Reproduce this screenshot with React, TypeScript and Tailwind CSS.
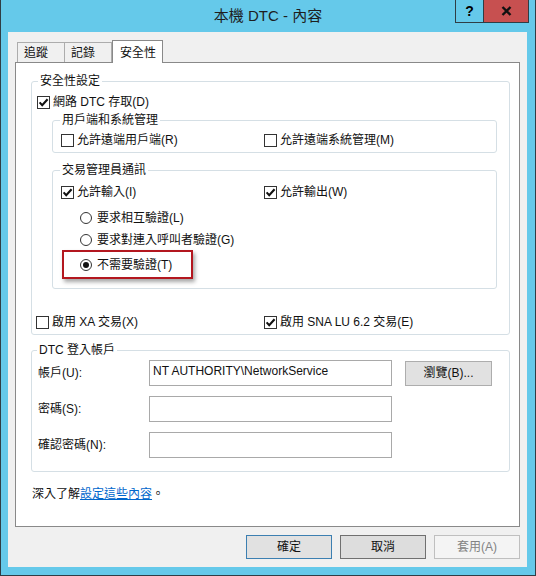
import React from 'react';

const Check: React.FC<{ checked?: boolean; label: string; className?: string }> = ({ checked, label, className = '' }) => (
  <div className={`flex h-[16px] items-center ${className}`}>
    <span className="flex h-[13px] w-[13px] shrink-0 items-center justify-center border border-[#333333] bg-white">
      {checked && (
        <svg width="11" height="11" viewBox="0 0 11 11">
          <path d="M1.6 5.4 L4.2 8.2 L9.6 2.2" fill="none" stroke="#111111" strokeWidth="2.1" />
        </svg>
      )}
    </span>
    <span className="ml-[3px] whitespace-nowrap">{label}</span>
  </div>
);

const Radio: React.FC<{ checked?: boolean; label: string; className?: string }> = ({ checked, label, className = '' }) => (
  <div className={`flex h-[16px] items-center ${className}`}>
    <span className="flex h-[12px] w-[12px] shrink-0 items-center justify-center rounded-full border border-[#333333] bg-white">
      {checked && <span className="h-[6px] w-[6px] rounded-full bg-[#111111]" />}
    </span>
    <span className="ml-[5px] whitespace-nowrap">{label}</span>
  </div>
);

const Field: React.FC<{ label: string; value?: string; className?: string; children?: React.ReactNode }> = ({ label, value, className = '', children }) => (
  <div className={`flex items-center pl-[6px] ${className}`}>
    <span className="w-[111px] whitespace-nowrap">{label}</span>
    <div className="h-[26px] w-[243px] border border-[#a9a9a9] bg-white pl-[3px] pt-[2px] whitespace-nowrap">{value}</div>
    {children}
  </div>
);

export default function App() {
  return (
    <div className="h-[576px] w-[536px] border-x border-b border-[#2f3d45] bg-[#65c9ea] text-[12px] leading-[16px] text-[#111111] font-['Liberation_Sans','Noto_Sans_CJK_TC',sans-serif]">
      {/* title bar */}
      <div className="grid h-[32px] grid-cols-[1fr_auto_1fr]">
        <div />
        <div className="pt-[7px] text-[15px] leading-[18px] text-[#1e1e1e]">本機 DTC - 內容</div>
        <div className="flex justify-end pr-[6px]">
          <div className="flex h-[23px] border-x border-b border-[#2f3d45]">
            <div className="flex w-[27px] items-center justify-center text-[14px] font-bold text-black">?</div>
            <div className="flex w-[45px] items-center justify-center border-l border-[#2f3d45] bg-[#c75050]">
              <svg width="11" height="10" viewBox="0 0 11 10">
                <path d="M1.5 1 L9.5 9 M9.5 1 L1.5 9" stroke="#111111" strokeWidth="2.4" />
              </svg>
            </div>
          </div>
        </div>
      </div>

      {/* client area */}
      <div className="ml-[7px] flex h-[535px] w-[519px] flex-col bg-[#f0f0f0]">
        <div className="ml-[9px] mt-[8px] flex h-[22px] items-end">
          <div className="flex h-[20px] w-[48px] items-center border-x border-t border-[#acacac] pl-[6px]">追蹤</div>
          <div className="flex h-[20px] w-[47px] items-center border-r border-t border-[#acacac] pl-[6px]">記錄</div>
          <div className="relative z-10 -mb-px flex h-[23px] w-[51px] items-center border-x border-t border-[#898989] bg-white pl-[7px] pt-[1px]">安全性</div>
        </div>

        <div className="ml-[7px] flex h-[465px] w-[505px] flex-col border border-[#898989] bg-white">
          {/* 安全性設定 */}
          <fieldset className="ml-[15px] mt-[10px] w-[479px] rounded-[3px] border border-[#d5dfe5] pb-[4px]">
            <legend className="ml-[6px] px-[2px]">安全性設定</legend>
            <Check checked label="網路 DTC 存取(D)" className="mt-[5px] pl-[5px]" />

            <fieldset className="ml-[20px] mt-[2px] w-[445px] rounded-[3px] border border-[#d5dfe5] pb-[4px]">
              <legend className="ml-[7px] px-[2px]">用戶端和系統管理</legend>
              <div className="mt-[4px] flex pl-[8px]">
                <Check label="允許遠端用戶端(R)" className="w-[203px]" />
                <Check label="允許遠端系統管理(M)" />
              </div>
            </fieldset>

            <fieldset className="ml-[20px] mt-[9px] w-[445px] rounded-[3px] border border-[#d5dfe5] pb-[9px]">
              <legend className="ml-[7px] px-[2px]">交易管理員通訊</legend>
              <div className="mt-[6px] flex pl-[8px]">
                <Check checked label="允許輸入(I)" className="w-[203px]" />
                <Check checked label="允許輸出(W)" />
              </div>
              <Radio label="要求相互驗證(L)" className="mt-[10px] pl-[27px]" />
              <Radio label="要求對連入呼叫者驗證(G)" className="mt-[6px] pl-[27px]" />
              <div className="ml-[9px] mt-[2px] flex h-[29px] w-[131px] items-center border-2 border-[#b3171f] pl-[16px] shadow-[2px_3px_4px_rgba(0,0,0,0.35)]">
                <Radio checked label="不需要驗證(T)" />
              </div>
            </fieldset>

            <div className="mt-[25px] flex pl-[4px]">
              <Check label="啟用 XA 交易(X)" className="w-[228px]" />
              <Check checked label="啟用 SNA LU 6.2 交易(E)" />
            </div>
          </fieldset>

          {/* DTC 登入帳戶 */}
          <fieldset className="ml-[15px] mt-[7px] w-[479px] rounded-[3px] border border-[#d5dfe5] pb-[13px]">
            <legend className="ml-[5px] px-[2px]">DTC 登入帳戶</legend>
            <Field label="帳戶(U):" value={'NT AUTHORITY\\NetworkService'} className="mt-[2px]">
              <button className="ml-[13px] h-[25px] w-[87px] border border-[#adadad] bg-[#e1e1e1]">瀏覽(B)...</button>
            </Field>
            <Field label="密碼(S):" className="mt-[10px]" />
            <Field label="確認密碼(N):" className="mt-[10px]" />
          </fieldset>

          <div className="ml-[16px] mt-[14px]">
            深入了解<span className="text-[#0066cc] underline">設定這些內容</span>。
          </div>
        </div>

        <div className="mt-[8px] flex justify-end gap-[8px] pr-[7px]">
          <button className="h-[24px] w-[86px] border border-[#3c7fb1] bg-[#e1e1e1]">確定</button>
          <button className="h-[24px] w-[86px] border border-[#707070] bg-[#dddddd]">取消</button>
          <button className="h-[24px] w-[86px] border border-[#bfbfbf] bg-[#f4f4f4] text-[#838383]">套用(A)</button>
        </div>
      </div>
    </div>
  );
}
